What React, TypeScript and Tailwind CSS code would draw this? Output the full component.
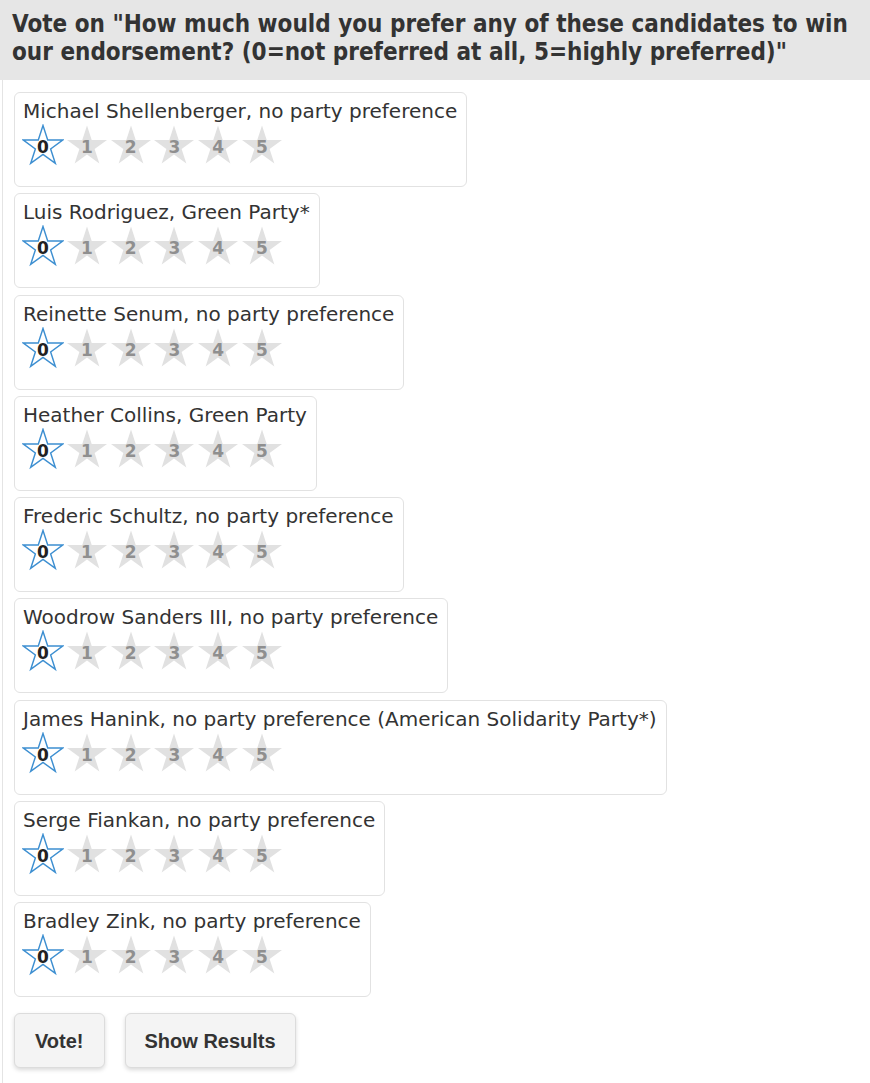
import React, { useState } from "react";

const candidates = [
  "Michael Shellenberger, no party preference",
  "Luis Rodriguez, Green Party*",
  "Reinette Senum, no party preference",
  "Heather Collins, Green Party",
  "Frederic Schultz, no party preference",
  "Woodrow Sanders III, no party preference",
  "James Hanink, no party preference (American Solidarity Party*)",
  "Serge Fiankan, no party preference",
  "Bradley Zink, no party preference",
];

const STAR =
  "21,0 25.94,15.2 41.92,15.2 28.99,24.6 33.93,39.8 21,30.4 8.07,39.8 13.01,24.6 0.08,15.2 16.06,15.2";

function Star({ value, selected }: { value: number; selected: boolean }) {
  return (
    <div className="relative w-[42px] h-[42px] mr-[1.8px] cursor-pointer">
      <svg viewBox="-1 -1 44 43" className="w-[42px] h-[42px]">
        <polygon
          points={STAR}
          fill={selected ? "#ffffff" : "#e1e1e1"}
          stroke={selected ? "#3d8fd1" : "none"}
          strokeWidth={1.5}
          strokeLinejoin="miter"
        />
      </svg>
      <span
        className={`absolute left-0 right-0 top-[13px] text-center text-[17px] leading-[20px] font-bold ${
          selected ? "text-[#222]" : "text-[#8f8f8f]"
        }`}
      >
        {value}
      </span>
    </div>
  );
}

function CandidateCard({ name }: { name: string }) {
  const [rating, setRating] = useState(0);
  return (
    <div className="w-fit border border-[#e2e2e2] rounded-[6px] pl-[8px] pr-[9px] pt-[8px] pb-[20px] mb-[6.25px]">
      <div className="text-[20px] leading-[20px] text-[#333] font-['DejaVu_Sans',sans-serif]">
        {name}
      </div>
      <div className="flex mt-[3px] -ml-px">
        {[0, 1, 2, 3, 4, 5].map((v) => (
          <div key={v} onClick={() => setRating(v)}>
            <Star value={v} selected={v === rating} />
          </div>
        ))}
      </div>
    </div>
  );
}

export default function App() {
  return (
    <div className="w-[870px] min-h-[1083px] bg-white font-['DejaVu_Sans',sans-serif]">
      <div className="bg-[#e6e6e6] h-[80px] pl-[12px] pt-[10px]">
        <h1 className="text-[24px] leading-[28px] font-bold text-[#333] font-['DejaVu_Sans_Condensed','DejaVu_Sans',sans-serif] font-stretch-condensed whitespace-nowrap">
          Vote on "How much would you prefer any of these candidates to win
          <br />
          our endorsement? (0=not preferred at all, 5=highly preferred)"
        </h1>
      </div>
      <div className="ml-[2px] border-l border-[#e4e4e4] pl-[11px] pt-[12px] pb-[15px]">
        {candidates.map((c) => (
          <CandidateCard key={c} name={c} />
        ))}
        <div className="flex gap-[20px] mt-[16px] font-['Liberation_Sans',Arial,sans-serif]">
          <button className="h-[55px] px-[20px] bg-[#f4f4f4] border border-[#dcdcdc] rounded-[6px] shadow-[0_2px_4px_rgba(0,0,0,0.15)] text-[20px] font-bold text-[#333]">
            Vote!
          </button>
          <button className="h-[55px] px-[19px] bg-[#f4f4f4] border border-[#dcdcdc] rounded-[6px] shadow-[0_2px_4px_rgba(0,0,0,0.15)] text-[20px] font-bold text-[#333]">
            Show Results
          </button>
        </div>
      </div>
    </div>
  );
}
